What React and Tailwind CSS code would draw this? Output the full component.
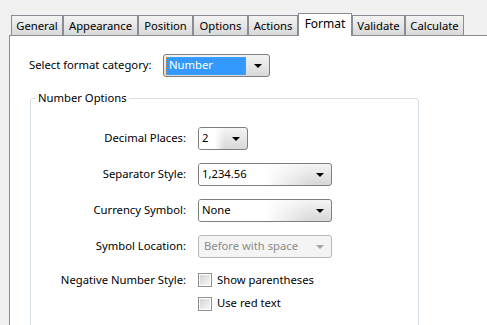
import React from 'react'

const TABS = [
  { label: 'General', w: 'w-[52px]' },
  { label: 'Appearance', w: 'w-[75px]' },
  { label: 'Position', w: 'w-[55px]' },
  { label: 'Options', w: 'w-[55px]' },
  { label: 'Actions', w: 'w-[50px]' },
  { label: 'Format', w: 'w-[54px]', active: true },
  { label: 'Validate', w: 'w-[53px]' },
  { label: 'Calculate', w: 'w-[59px]' },
]

function Arrow({ disabled }) {
  return (
    <svg width="8" height="4" viewBox="0 0 8 4" className="block">
      <path d="M0 0h8L4 4z" fill={disabled ? '#a3a3a3' : '#000'} />
    </svg>
  )
}

function Combo({ value, width, disabled }) {
  if (disabled) {
    return (
      <div className={`${width} h-[23px] flex items-center rounded-[3px] border border-[#b5b9bc] bg-[#f4f4f4]`}>
        <div className="flex-1 pl-[5px] text-[#8a8a8a]">{value}</div>
        <div className="w-[22px] flex justify-center"><Arrow disabled /></div>
      </div>
    )
  }
  return (
    <div className={`${width} h-[23px] flex items-center rounded-[3px] border border-[#7e7e7e] bg-gradient-to-b from-[#f4f4f4] to-[#d8d8d8]`}>
      <div className="flex-1 self-stretch flex items-center pl-[3px] bg-gradient-to-r from-white from-60% to-transparent rounded-l-[2px]">{value}</div>
      <div className="w-[22px] flex justify-center"><Arrow /></div>
    </div>
  )
}

function Check({ label }) {
  return (
    <div className="flex items-center gap-[5px] h-[14px]">
      <div className="w-[14px] h-[14px] border border-[#8e8f8f] bg-white p-px">
        <div className="w-full h-full bg-gradient-to-br from-[#d4d4d4] to-[#f7f7f7]" />
      </div>
      <span>{label}</span>
    </div>
  )
}

function Row({ label, children }) {
  return (
    <div className="flex items-center">
      <div className="w-[167px] pr-[12px] text-right whitespace-nowrap">{label}</div>
      {children}
    </div>
  )
}

export default function App() {
  return (
    <div
      className="w-[487px] h-[325px] overflow-hidden bg-[#f0f0f0] text-[11.25px] text-black flex flex-col"
      style={{ fontFamily: '"Noto Sans", "Open Sans", sans-serif' }}
    >
      <div className="flex items-end pt-[13px] pl-[11px]">
        {TABS.map((t) =>
          t.active ? (
            <div
              key={t.label}
              className={`${t.w} h-[23px] -mb-px relative z-10 flex items-center justify-center bg-white border border-b-0 border-[#898c95] pb-[2px] text-[12px]`}
            >
              {t.label}
            </div>
          ) : (
            <div
              key={t.label}
              className={`${t.w} h-[20px] flex items-center justify-center border border-b-0 border-[#898c95] bg-gradient-to-b from-[#f3f3f3] to-[#d9d9d9] leading-none`}
            >
              {t.label}
            </div>
          )
        )}
      </div>

      <div className="flex-1 ml-[9px] bg-white border-l border-t border-[#898c95]">
        <div className="flex items-center mt-[18px] pl-[19px]">
          <div className="w-[134px]">Select format category:</div>
          <div className="w-[107px] h-[23px] flex items-center rounded-[3px] border border-[#7e7e7e] bg-gradient-to-b from-[#f4f4f4] to-[#d8d8d8]">
            <div className="ml-[2px] w-[80px] h-[18px] flex items-center pl-[2px] bg-[#3399ff] text-white border border-dotted border-[#d9822b]">
              Number
            </div>
            <div className="flex-1 flex justify-center"><Arrow /></div>
          </div>
        </div>

        <fieldset className="ml-[20px] mt-[13px] w-[389px] h-[260px] border border-[#d5dfe5] rounded-[3px]">
          <legend className="ml-[5px] px-[2px] leading-[16px]">Number Options</legend>
          <div className="flex flex-col gap-[13px] pt-[21px]">
            <Row label="Decimal Places:">
              <Combo value="2" width="w-[50px]" />
            </Row>
            <Row label="Separator Style:">
              <Combo value="1,234.56" width="w-[134px]" />
            </Row>
            <Row label="Currency Symbol:">
              <Combo value="None" width="w-[134px]" />
            </Row>
            <Row label="Symbol Location:">
              <Combo value="Before with space" width="w-[134px]" disabled />
            </Row>
          </div>
          <div className="flex flex-col gap-[8px] mt-[14px]">
            <Row label="Negative Number Style:">
              <Check label="Show parentheses" />
            </Row>
            <Row label="">
              <Check label="Use red text" />
            </Row>
          </div>
        </fieldset>
      </div>
    </div>
  )
}
